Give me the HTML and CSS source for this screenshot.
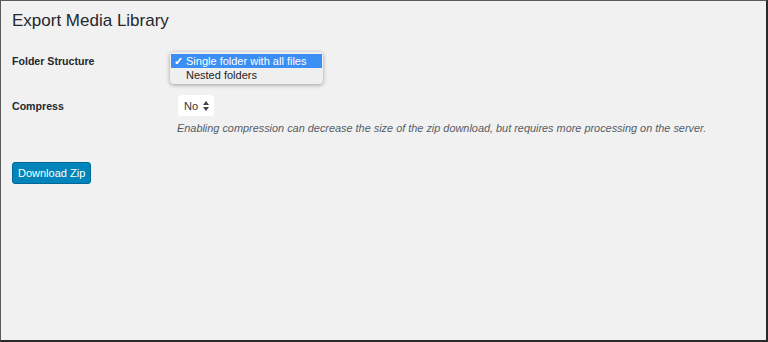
FILE: index.html
```html
<!DOCTYPE html>
<html lang="en">
<head>
    <meta charset="UTF-8">
    <meta name="viewport" content="width=device-width, initial-scale=1.0">
    <title>Export Media Library</title>
    <link rel="stylesheet" href="styles.css">
</head>
<body>

<div class="frame">
    <h1>Export Media Library</h1>

    <div class="form-row">
        <label class="row-label">Folder Structure</label>
        <div class="field">
            <div class="select-menu">
                <div class="menu-item selected"><span class="check">&#10003;</span>Single folder with all files</div>
                <div class="menu-item">Nested folders</div>
            </div>
        </div>
    </div>

    <div class="form-row compress-row">
        <label class="row-label">Compress</label>
        <div class="field">
            <div class="select-box">
                <span>No</span>
                <svg class="arrows" width="6" height="10" viewBox="0 0 6 10">
                    <path d="M3 0 L6 4 L0 4 Z" fill="#444"/>
                    <path d="M0 6 L6 6 L3 10 Z" fill="#444"/>
                </svg>
            </div>
        </div>
    </div>
    <p class="description">Enabling compression can decrease the size of the zip download, but requires more processing on the server.</p>

    <button type="button" class="button">Download Zip</button>
</div>

</body>
</html>
```

FILE: styles.css
```css
body {
    margin: 0;
    font-family: "Liberation Sans", Arial, sans-serif;
    color: #23282d;
}
.frame {
    width: 768px;
    height: 342px;
    box-sizing: border-box;
    background-color: #f1f1f1;
    border-top: 1px solid #5a5a5a;
    border-left: 1px solid #5a5a5a;
    border-right: 2px solid #2a2a2a;
    border-bottom: 2px solid #2a2a2a;
    padding: 8px 11px;
}
h1 {
    margin: 0;
    font-size: 17px;
    line-height: 24px;
    font-weight: normal;
}
.form-row {
    display: flex;
    align-items: center;
    height: 22px;
    margin-top: 17px;
}
.compress-row {
    margin-top: 23px;
    height: 21px;
}
.row-label {
    width: 166px;
    font-size: 10.6px;
    font-weight: bold;
}
.field {
    position: relative;
    height: 100%;
}
.select-menu {
    position: absolute;
    left: -8px;
    top: 2px;
    width: 153px;
    padding: 2px 1px;
    box-sizing: border-box;
    background: #efefef;
    border-radius: 4px;
    box-shadow: 0 1px 4px rgba(0, 0, 0, 0.35);
}
.menu-item {
    height: 14px;
    line-height: 14px;
    font-size: 11px;
    padding-left: 15px;
    color: #222;
    position: relative;
}
.menu-item.selected {
    background: #3b8ef3;
    color: #fff;
}
.check {
    position: absolute;
    left: 3px;
    font-size: 11px;
    font-weight: bold;
}
.select-box {
    display: flex;
    align-items: center;
    gap: 5px;
    height: 21px;
    box-sizing: border-box;
    padding: 0 5px 0 6px;
    background: #fff;
    border-radius: 3px;
    font-size: 11px;
    color: #333;
}
.description {
    margin: 5px 0 0 165px;
    font-size: 10.9px;
    line-height: 14px;
    font-style: italic;
    color: #555d66;
}
.button {
    margin-top: 27px;
    height: 22px;
    padding: 0 5px;
    background-color: #0085ba;
    border: 1px solid #006799;
    border-radius: 3px;
    color: #fff;
    font-family: "Liberation Sans", Arial, sans-serif;
    font-size: 11px;
}
```
